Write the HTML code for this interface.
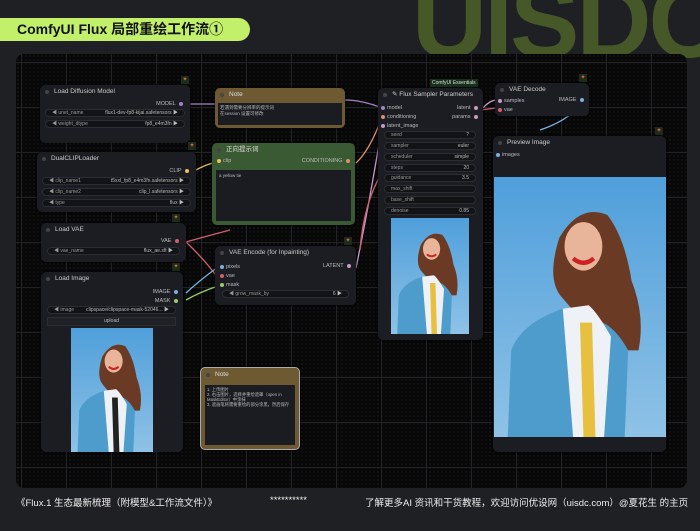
<!DOCTYPE html>
<html><head><meta charset="utf-8"><style>
*{margin:0;padding:0;box-sizing:border-box}
body{width:700px;height:531px;background:#1f2023;position:relative;overflow:hidden;font-family:"Liberation Sans","Noto Sans CJK SC",sans-serif;color:#ccc}
.logo{position:absolute;left:412px;top:-30px;font:bold 104px "Liberation Sans",sans-serif;color:#475828;letter-spacing:-3px;line-height:1}
.pill{position:absolute;left:0;top:18px;width:250px;height:23px;background:#c3f06a;border-radius:0 12px 12px 0;font-weight:bold;font-size:14px;color:#111;padding-left:17px;line-height:23px;font-family:"Liberation Sans","Noto Sans CJK SC",sans-serif}
.canvas{position:absolute;left:16px;top:54px;width:671px;height:434px;background-color:#070708;border-radius:8px;overflow:hidden;
background-image:radial-gradient(#2a2a2c 0.6px,transparent 0.8px),linear-gradient(#222226 1px,transparent 1px),linear-gradient(90deg,#222226 1px,transparent 1px);background-size:4px 4px,45px 45px,45px 45px;background-position:0 0,0 8px,5px 0}
.node{position:absolute;background:#1b1d22;border-radius:5px;font-size:6px;color:#bbb;box-shadow:0 0 2px #000}
.hd{height:13px;line-height:13px;padding-left:14px;font-size:6.5px;color:#ccc;position:relative}
.hd:before{content:"";position:absolute;left:5px;top:5px;width:4px;height:4px;border-radius:50%;background:#444}
.w{position:absolute;height:8px;border-radius:4px;background:#121317;border:1px solid #2b2d33;font-size:5px;line-height:6px;color:#999;padding:0 6px}
.w b{float:right;font-weight:normal;color:#bbb}
.r{position:absolute;font-size:5.5px;color:#bbb}
.d{display:inline-block;width:4px;height:4px;border-radius:50%;vertical-align:middle;margin:0 2px}
.fox{position:absolute;width:8px;height:8px;background:#1d2b1d;color:#e66b2a;font-size:6px;line-height:8px;text-align:center}
.foot{position:absolute;top:495px;font-size:9.5px;color:#eee}
</style></head><body>
<svg width="0" height="0" style="position:absolute"><defs>
<linearGradient id="sky" x1="0" y1="0" x2="0" y2="1"><stop offset="0" stop-color="#4f9fdb"/><stop offset="1" stop-color="#8fc2e6"/></linearGradient>
<symbol id="girl" viewBox="0 0 100 150" preserveAspectRatio="none">
<rect width="100" height="150" fill="url(#sky)"/>
<path d="M38 35 Q50 15 66 22 Q76 35 80 60 Q88 80 84 100 L66 100 L40 70 Q30 60 38 35Z" fill="#6b3a24"/>
<ellipse cx="52" cy="40" rx="11" ry="14" fill="#e8b49a"/>
<path d="M46 47 Q52 52 58 47" stroke="#c22" stroke-width="2.5" fill="none"/>
<path d="M8 150 L10 100 Q16 84 40 76 L55 82 Q68 82 78 100 L76 150Z" fill="#4d9ccb"/>
<path d="M40 76 L46 150 L64 150 L68 92 Q60 78 55 74Z" fill="#eef2f7"/>
<path d="M50 84 L57 84 L59 150 L52 150Z" fill="var(--tie)"/>
</symbol></defs></svg>

<div class="logo">UISDC</div>
<div class="pill">ComfyUI Flux 局部重绘工作流①</div>

<div class="canvas"></div>

<svg style="position:absolute;left:0;top:0" width="700" height="531">
<g fill="none" stroke-width="1.3">
<path d="M188 104 L215 104 M345 100 Q362 100 382 108" stroke="#a085c5"/>
<path d="M196 170 Q205 165 213 163" stroke="#e3c35a"/>
<path d="M356 163 Q370 150 382 117" stroke="#e2906a"/>
<path d="M186 242 Q200 238 230 230 M186 242 Q205 260 218 278" stroke="#d0606a"/>
<path d="M356 268 Q370 200 382 126 M483 108 Q490 100 497 100" stroke="#c79ac9"/>
<path d="M186 293 Q200 280 218 267" stroke="#79b2de"/>
<path d="M186 300 Q200 292 218 286" stroke="#9ccb6c"/>
<path d="M360 250 Q370 120 497 108" stroke="#d0606a"/>
<path d="M585 100 Q570 120 540 130" stroke="#79b2de"/>
</g></svg>

<div class="node" style="left:40px;top:85px;width:150px;height:58px"><div class="hd">Load Diffusion Model</div>
<div class="r" style="right:5px;top:16px">MODEL <span class="d" style="background:#a085c5"></span></div>
<div class="w" style="left:5px;top:24px;width:140px">◀ unet_name<b>flux1-dev-fp8-kijai.safetensors ▶</b></div>
<div class="w" style="left:5px;top:35px;width:140px">◀ weight_dtype<b>fp8_e4m3fn ▶</b></div></div>
<div class="fox" style="left:181px;top:76px">✦</div>

<div class="node" style="left:215px;top:88px;width:130px;height:40px;background:#6d5a33"><div class="hd" style="color:#ddd">Note</div>
<div style="position:absolute;left:3px;top:15px;width:124px;height:22px;background:#1a1c22;font-size:4.5px;color:#bbb;padding:2px">若遇到需要分辨率的提示词<br>在session 设置可修改</div></div>

<div class="node" style="left:37px;top:152px;width:159px;height:60px"><div class="hd">DualCLIPLoader</div>
<div class="r" style="right:5px;top:16px">CLIP <span class="d" style="background:#e3c35a"></span></div>
<div class="w" style="left:5px;top:25px;width:149px">◀ clip_name1<b>t5xxl_fp8_e4m3fn.safetensors ▶</b></div>
<div class="w" style="left:5px;top:36px;width:149px">◀ clip_name2<b>clip_l.safetensors ▶</b></div>
<div class="w" style="left:5px;top:47px;width:149px">◀ type<b>flux ▶</b></div></div>
<div class="fox" style="left:188px;top:142px">✦</div>

<div class="node" style="left:212px;top:143px;width:143px;height:82px;background:#3a5a33"><div class="hd" style="color:#ddd">正向提示词</div>
<div class="r" style="left:3px;top:15px"><span class="d" style="background:#e3c35a"></span>clip</div>
<div class="r" style="right:3px;top:15px">CONDITIONING <span class="d" style="background:#e2906a"></span></div>
<div style="position:absolute;left:4px;top:27px;width:135px;height:51px;background:#1a1c22;font-size:4.5px;color:#bbb;padding:3px">a yellow tie</div></div>

<div class="node" style="left:41px;top:223px;width:145px;height:39px"><div class="hd">Load VAE</div>
<div class="r" style="right:5px;top:15px">VAE <span class="d" style="background:#d0606a"></span></div>
<div class="w" style="left:6px;top:24px;width:133px">◀ vae_name<b>flux_ae.sft ▶</b></div></div>
<div class="fox" style="left:172px;top:214px">✦</div>

<div class="node" style="left:215px;top:246px;width:141px;height:59px"><div class="hd">VAE Encode (for Inpainting)</div>
<div class="r" style="left:3px;top:17px;line-height:9px"><span class="d" style="background:#79b2de"></span>pixels<br><span class="d" style="background:#d0606a"></span>vae<br><span class="d" style="background:#9ccb6c"></span>mask</div>
<div class="r" style="right:3px;top:17px">LATENT <span class="d" style="background:#c79ac9"></span></div>
<div class="w" style="left:7px;top:44px;width:127px">◀ grow_mask_by<b>6 ▶</b></div></div>
<div class="fox" style="left:344px;top:237px">✦</div>
<div class="fox" style="left:172px;top:263px">✦</div>

<div class="node" style="left:41px;top:272px;width:142px;height:180px"><div class="hd">Load Image</div>
<div class="r" style="right:3px;top:16px;text-align:right;line-height:9px">IMAGE <span class="d" style="background:#79b2de"></span><br>MASK <span class="d" style="background:#9ccb6c"></span></div>
<div class="w" style="left:6px;top:34px;width:129px">◀ image<b>clipspace/clipspace-mask-52046... ▶</b></div>
<div style="position:absolute;left:6px;top:45px;width:129px;height:9px;background:#1f2126;border:1px solid #2b2d33;font-size:5px;text-align:center;color:#bbb">upload</div>
<svg style="position:absolute;left:30px;top:56px;--tie:#222" width="82" height="124"><use href="#girl" width="82" height="124"/></svg></div>

<div class="node" style="left:200px;top:367px;width:100px;height:83px;background:#6d5a33;border:1px solid #aaa"><div class="hd" style="color:#ddd">Note</div>
<div style="position:absolute;left:4px;top:17px;width:90px;height:60px;background:#1a1c22;font-size:4.3px;color:#bbb;padding:2px;line-height:5px">1. 上传图片<br>2. 右击图片，选择并重绘遮罩（open in MaskEditor）中涂抹<br>3. 遮画笔将需要重绘的部分涂黑，然后保存</div></div>

<div style="position:absolute;left:430px;top:79px;background:#17301c;color:#ddd;font-size:5px;padding:1px 2px">ComfyUI Essentials</div>
<div class="node" style="left:378px;top:88px;width:105px;height:252px"><div class="hd">✎ Flux Sampler Parameters</div>
<div class="r" style="left:1px;top:16px;line-height:9px"><span class="d" style="background:#a085c5"></span>model<br><span class="d" style="background:#e2906a"></span>conditioning<br><span class="d" style="background:#c79ac9"></span>latent_image</div>
<div class="r" style="right:3px;top:16px;text-align:right;line-height:9px">latent <span class="d" style="background:#c79ac9"></span><br>params <span class="d" style="background:#c79ac9"></span></div>
<div class="w" style="left:6px;top:43px;width:92px">seed<b>?</b></div>
<div class="w" style="left:6px;top:54px;width:92px">sampler<b>euler</b></div>
<div class="w" style="left:6px;top:65px;width:92px">scheduler<b>simple</b></div>
<div class="w" style="left:6px;top:76px;width:92px">steps<b>20</b></div>
<div class="w" style="left:6px;top:86px;width:92px">guidance<b>3.5</b></div>
<div class="w" style="left:6px;top:97px;width:92px">max_shift<b></b></div>
<div class="w" style="left:6px;top:108px;width:92px">base_shift<b></b></div>
<div class="w" style="left:6px;top:119px;width:92px">denoise<b>0.85</b></div>
<svg style="position:absolute;left:13px;top:130px;--tie:#e8c040" width="78" height="116"><use href="#girl" width="78" height="116"/></svg></div>

<div class="node" style="left:495px;top:83px;width:94px;height:33px"><div class="hd">VAE Decode</div>
<div class="r" style="left:1px;top:14px;line-height:9px"><span class="d" style="background:#c79ac9"></span>samples<br><span class="d" style="background:#d0606a"></span>vae</div>
<div class="r" style="right:3px;top:14px">IMAGE <span class="d" style="background:#79b2de"></span></div></div>
<div class="fox" style="left:579px;top:74px">✦</div>
<div class="fox" style="left:655px;top:127px">✦</div>

<div class="node" style="left:493px;top:136px;width:173px;height:316px"><div class="hd">Preview Image</div>
<div class="r" style="left:1px;top:16px"><span class="d" style="background:#79b2de"></span>images</div>
<svg style="position:absolute;left:1px;top:41px;--tie:#e8c040" width="172" height="260"><use href="#girl" width="172" height="260"/></svg></div>

<div class="foot" style="left:16px">《Flux.1 生态最新梳理（附模型&amp;工作流文件）》</div>
<div class="foot" style="left:270px">**********</div>
<div class="foot" style="left:365px">了解更多AI 资讯和干货教程，欢迎访问优设网（uisdc.com）@夏花生 的主页</div>
</body></html>
